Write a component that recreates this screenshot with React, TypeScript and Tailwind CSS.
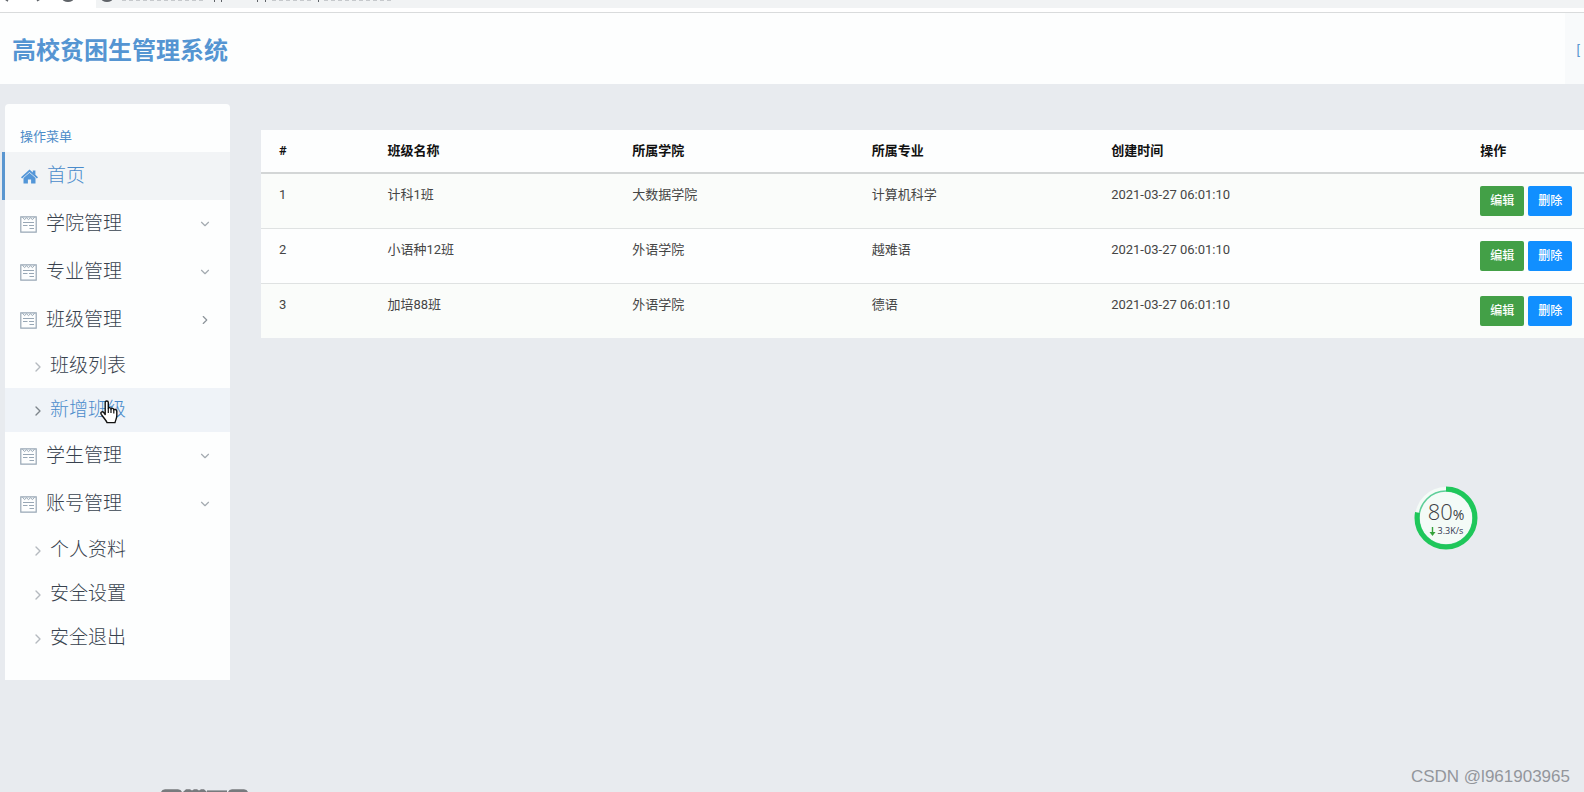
import { useState } from 'react';
import { ChevronDown, ChevronRight } from 'lucide-react';

type Entry = { label: string; open?: boolean; children?: string[] };

const MENU: Entry[] = [
  { label: '学院管理' },
  { label: '专业管理' },
  { label: '班级管理', open: true, children: ['班级列表', '新增班级'] },
  { label: '学生管理' },
  { label: '账号管理', children: ['个人资料', '安全设置', '安全退出'] },
];

const ROWS = [
  { id: 1, name: '计科1班', college: '大数据学院', major: '计算机科学', created: '2021-03-27 06:01:10' },
  { id: 2, name: '小语种12班', college: '外语学院', major: '越难语', created: '2021-03-27 06:01:10' },
  { id: 3, name: '加培88班', college: '外语学院', major: '德语', created: '2021-03-27 06:01:10' },
];

function HomeIcon() {
  return (
    <svg viewBox="0 0 17 15" className="h-[15px] w-[17px] shrink-0" fill="#5396d8" aria-hidden>
      <path d="M8.5 0.4 L11.8 3.4 V1.4 H14.4 V5.7 L17 8.2 L15.9 9.5 L8.5 2.9 L1.1 9.5 L0 8.2 Z" />
      <path d="M8.5 3.8 L14.5 9.1 V14.6 H10.1 V10.4 H6.9 V14.6 H2.5 V9.1 Z" />
    </svg>
  );
}

function NoteIcon() {
  return (
    <svg viewBox="0 0 17 17" className="size-[17px] shrink-0" fill="none" stroke="#98a7b5" aria-hidden>
      <path d="M0.8 0.8 H16.2 V16.2 H0.8 Z" strokeWidth="1.2" />
      <path d="M2.5 1.2 L4.5 3.6 L6.5 1.8 L8.5 3.6 L10.5 1.8 L12.5 3.6 L14.5 1.2" />
      <path d="M3 6.5 H14 M3 9.5 H7.5 M9 9.5 H14 M9.5 12.5 H14" strokeWidth="1.2" />
    </svg>
  );
}

function HandCursor() {
  return (
    <svg viewBox="0 0 18 24" className="pointer-events-none absolute top-3 left-[95px] h-6 w-[18px]" aria-hidden>
      <path
        d="M5.2 14.5 V2.6 C5.2 0.4 8.3 0.4 8.3 2.6 V8.6 C8.5 7.1 11 7.3 11 9 C11.4 7.8 13.8 8.1 13.8 9.9 C14.4 8.9 16.8 9.3 16.8 11.2 V15.6 C16.8 18.2 15.8 19.4 15 22.6 H7 C6.4 20.4 4 18.4 1.3 14.3 C0 12.2 2.4 10.8 3.8 12.6 Z"
        fill="#fff"
        stroke="#111"
        strokeWidth="1.4"
        strokeLinejoin="round"
      />
      <path d="M8.3 8.5 V13 M11 9 V13 M13.8 10 V13.4" stroke="#111" strokeWidth="1.2" />
    </svg>
  );
}

// Bottom sliver of the browser toolbar: the address pill and the feet of its icons.
function BrowserEdge() {
  return (
    <div className="relative h-[13px] overflow-hidden border-b border-[#d9dbdc] bg-white">
      <div className="ml-24 h-2 bg-[#f1f3f4]" />
      <svg viewBox="0 0 400 8" className="absolute top-0 left-0 h-2 w-[400px]" fill="none" stroke="#5f6368" aria-hidden>
        <path d="M5 -1 L8 1.2" strokeWidth="1.5" />
        <path d="M37 1 L40 -1" strokeWidth="1.5" />
        <path d="M63 -2 A5 3 0 0 0 73 -2" strokeWidth="2" />
        <path d="M102 -2 A5 3 0 0 0 112 -2" strokeWidth="2" />
        <path d="M214.5 0 V2 M221.5 0 V2 M257.5 0 V2 M265.5 0 V2 M318.5 0 V2" />
        <path d="M122 0.5 H204 M272 0.5 H312 M324 0.5 H392" stroke="#c6c9cc" strokeDasharray="4 3" />
      </svg>
    </div>
  );
}

function Sidebar() {
  return (
    <nav className="w-[225px] shrink-0 rounded-t-sm bg-[#fdfefe] pt-6 pb-5">
      <h2 className="px-[15px] pb-1.5 text-[13px] leading-[18px] text-[#4d8cc8]">操作菜单</h2>
      <a
        href="#home"
        className="-ml-[3px] flex h-12 items-center gap-[9px] border-l-[3px] border-[#5a96d0] bg-[#f2f4f6] pl-4 text-[19px] font-light text-[#4a8bcb]"
      >
        <HomeIcon />
        首页
      </a>
      {MENU.map((item) => (
        <div key={item.label}>
          <a
            href={`#${item.label}`}
            className="flex h-12 items-center pr-[18px] pl-[15px] text-[19px] font-light text-[#38424e]"
          >
            <NoteIcon />
            <span className="ml-[9px] flex-1">{item.label}</span>
            {item.open ? (
              <ChevronRight className="size-3.5 text-[#8d949b]" strokeWidth={2} />
            ) : (
              <ChevronDown className="size-3.5 text-[#a3aab0]" strokeWidth={2} />
            )}
          </a>
          {item.children?.map((child) => {
            const hovered = child === '新增班级';
            return (
              <a
                key={child}
                href={`#${child}`}
                className={`relative flex h-11 items-center gap-1 pl-[25px] text-[19px] font-light ${
                  hovered ? 'bg-[#eff3f8] text-[#4a8bcb]' : 'text-[#38424e]'
                }`}
              >
                <ChevronRight className={`mt-0.5 size-4 ${hovered ? 'text-[#7d848b]' : 'text-[#b4babf]'}`} strokeWidth={2} />
                {child}
                {hovered && <HandCursor />}
              </a>
            );
          })}
        </div>
      ))}
    </nav>
  );
}

function ClassTable() {
  const [rows, setRows] = useState(ROWS);

  return (
    <table className="w-full table-fixed border-separate border-spacing-0 bg-[#fdfefe] text-left text-[13px] leading-[18px]">
      <thead>
        <tr className="text-[#111] [&>th]:border-b-2 [&>th]:border-[#d3d6d6] [&>th]:py-3 [&>th]:pl-[18px]">
          <th className="w-[8.2%]">#</th>
          <th className="w-[18.5%]">班级名称</th>
          <th className="w-[18.1%]">所属学院</th>
          <th className="w-[18.1%]">所属专业</th>
          <th className="w-[27.9%]">创建时间</th>
          <th>操作</th>
        </tr>
      </thead>
      <tbody>
        {rows.map((row, i) => (
          <tr
            key={row.id}
            className={`text-[#454545] [&>td]:py-3 [&>td]:pl-[18px] [&>td]:align-top ${i % 2 ? '' : 'bg-[#fafcfa]'} ${
              i ? '[&>td]:border-t [&>td]:border-[#dfe2e2]' : ''
            }`}
          >
            <td>{row.id}</td>
            <td>{row.name}</td>
            <td>{row.college}</td>
            <td>{row.major}</td>
            <td>{row.created}</td>
            <td>
              <div className="flex gap-1 text-xs font-medium text-white">
                <button className="h-[30px] w-11 rounded-xs bg-[#43a047]">编辑</button>
                <button
                  className="h-[30px] w-11 rounded-xs bg-[#118fff]"
                  onClick={() => setRows(rows.filter((r) => r.id !== row.id))}
                >
                  删除
                </button>
              </div>
            </td>
          </tr>
        ))}
      </tbody>
    </table>
  );
}

// Floating memory / network gauge, ring is filled to 80%.
function SpeedBall() {
  return (
    <div className="absolute top-[486px] right-[106px] size-16">
      <svg viewBox="0 0 64 64" className="absolute inset-0" fill="none" aria-hidden>
        <circle cx="32" cy="32" r="31" fill="#f4fbf7" />
        <circle cx="32" cy="32" r="27" stroke="#5fcf9a" strokeWidth="1.5" />
        <circle
          cx="32"
          cy="32"
          r="29"
          stroke="#1fc75a"
          strokeWidth="5"
          pathLength="100"
          strokeDasharray="78 22"
          transform="rotate(-90 32 32)"
        />
      </svg>
      <div className="relative flex flex-col items-center pt-3 font-[Open_Sans,sans-serif] text-[#3c3f44]">
        <div className="text-[22px] leading-[26px] font-light">
          80<span className="text-sm font-normal">%</span>
        </div>
        <div className="flex items-center gap-0.5 text-[9px] leading-3 text-[#2f3350]">
          <svg viewBox="0 0 7 9" className="h-[9px] w-[7px]" fill="#35a23a" aria-hidden>
            <path d="M2.8 0 H4.2 V5 H6.5 L3.5 9 L0.5 5 H2.8 Z" />
          </svg>
          3.3K/s
        </div>
      </div>
    </div>
  );
}

// Tops of a caption that runs off the lower edge of the window.
function CaptionEdge() {
  return (
    <svg viewBox="0 0 88 3" className="absolute bottom-0 left-[161px] h-[3px] w-[88px]" fill="#777a7d" aria-hidden>
      <path d="M0 3 Q1 0.3 4 0.3 H17 Q20 0.3 21 3 Z" />
      <path d="M22 3 L25 0.3 H29 L31 1.5 L33 0.3 H36 L38 1.5 L40 0.3 H43 L46 3 Z" />
      <path d="M46 3 V1.4 H66 V3 Z" />
      <path d="M67 3 Q68 0.3 71 0.3 H83 Q86 0.3 87 3 Z" />
    </svg>
  );
}

export default function App() {
  return (
    <div className="relative min-h-screen overflow-hidden bg-[#e8ebef] font-[Roboto,'Noto_Sans_CJK_SC',sans-serif]">
      <BrowserEdge />
      <header className="flex h-[71px] items-center justify-between bg-[#fdfefe] pl-3">
        <h1 className="pt-1 text-2xl font-bold text-[#5595d2]">高校贫困生管理系统</h1>
        <div className="flex h-full w-[19px] items-center justify-end bg-[#f8fafb] pt-1 pr-1 text-[13px] text-[#5a96d0]">[</div>
      </header>
      <div className="flex items-start pt-5 pl-[5px]">
        <Sidebar />
        <main className="min-w-0 flex-1 pt-[26px] pl-[31px]">
          <ClassTable />
        </main>
      </div>
      <SpeedBall />
      <CaptionEdge />
      <div className="absolute right-[14px] bottom-1.5 font-['Liberation_Sans',sans-serif] text-[17px] leading-[18px] text-[#93969c]">
        CSDN @l961903965
      </div>
    </div>
  );
}
